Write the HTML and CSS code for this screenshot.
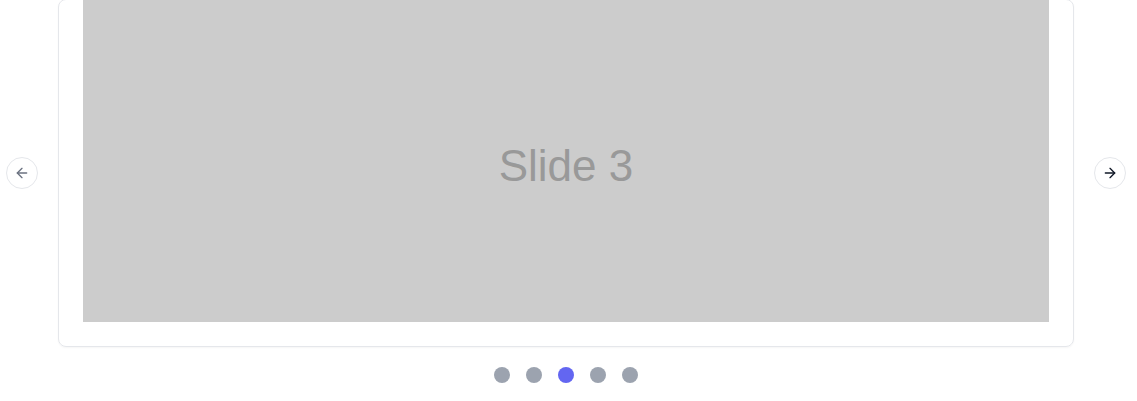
FILE: index.html
```html
<!DOCTYPE html>
<html lang="en">
<head>
    <meta charset="UTF-8">
    <meta name="viewport" content="width=device-width, initial-scale=1.0">
    <title>Carousel</title>
    <link rel="stylesheet" href="styles.css">
</head>
<body>
    <div class="carousel">
        <button class="nav-btn disabled" aria-label="Previous slide">
            <svg width="16" height="16" viewBox="0 0 24 24" fill="none" stroke="currentColor" stroke-width="2" stroke-linecap="round" stroke-linejoin="round"><path d="m12 19-7-7 7-7"/><path d="M19 12H5"/></svg>
        </button>

        <div class="stage">
            <div class="card">
                <div class="slide">Slide 3</div>
            </div>
            <div class="dots">
                <span class="dot"></span>
                <span class="dot"></span>
                <span class="dot active"></span>
                <span class="dot"></span>
                <span class="dot"></span>
            </div>
        </div>

        <button class="nav-btn" aria-label="Next slide">
            <svg width="16" height="16" viewBox="0 0 24 24" fill="none" stroke="currentColor" stroke-width="2" stroke-linecap="round" stroke-linejoin="round"><path d="M5 12h14"/><path d="m12 5 7 7-7 7"/></svg>
        </button>
    </div>
</body>
</html>
```

FILE: styles.css
```css
body {
    margin: 0;
    font-family: "Liberation Sans", Arial, sans-serif;
    background-color: #ffffff;
}
.carousel {
    display: flex;
    align-items: flex-start;
    gap: 20px;
    padding: 0 11px 0 6px;
    margin-top: -1px;
}
.nav-btn {
    flex: none;
    width: 32px;
    height: 32px;
    margin-top: 158px;
    border-radius: 50%;
    border: 1px solid #e5e7eb;
    background-color: #ffffff;
    color: #111827;
    display: flex;
    align-items: center;
    justify-content: center;
    padding: 0;
    cursor: pointer;
}
.nav-btn.disabled {
    color: #6b7280;
    cursor: default;
}
.stage {
    width: 1016px;
    flex: none;
}
.card {
    border: 1px solid #e5e7eb;
    border-radius: 8px;
    padding: 0 24px 24px;
    box-shadow: 0 1px 2px rgba(0, 0, 0, 0.04);
}
.slide {
    height: 322px;
    background-color: #cccccc;
    color: #999999;
    font-size: 44px;
    display: flex;
    align-items: center;
    justify-content: center;
    padding-top: 10px;
    box-sizing: border-box;
}
.dots {
    display: flex;
    justify-content: center;
    gap: 16px;
    margin-top: 20px;
}
.dot {
    width: 16px;
    height: 16px;
    border-radius: 50%;
    background-color: #9ca3af;
}
.dot.active {
    background-color: #6366f1;
}
```
